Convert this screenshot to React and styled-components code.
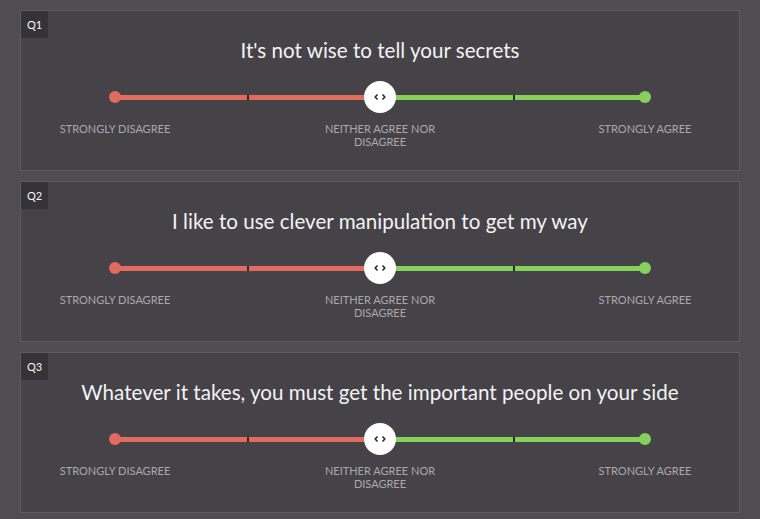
import styled, { createGlobalStyle } from 'styled-components';

const GlobalStyle = createGlobalStyle`
  html, body {
    margin: 0;
    padding: 0;
    background-color: #514c52;
    font-family: Lato, "Open Sans", sans-serif;
  }
`;

const Page = styled.div`
  display: flex;
  flex-direction: column;
  gap: 10px;
  padding: 10px 20px;
`;

const Card = styled.section`
  display: flex;
  flex-direction: column;
  align-items: center;
  height: 161px;
  box-sizing: border-box;
  background-color: #454248;
  border: 1px solid #5f5a60;
`;

const Badge = styled.div`
  align-self: flex-start;
  display: flex;
  align-items: center;
  justify-content: center;
  width: 27px;
  height: 27px;
  background-color: #353337;
  color: #f4f4f4;
  font-size: 11px;
`;

const Title = styled.h2`
  margin: 0;
  font-size: 20.6px;
  line-height: 24px;
  font-weight: 400;
  color: #f3f3f3;
  text-align: center;
`;

const Track = styled.div`
  display: flex;
  align-items: center;
  width: 542px;
  height: 32px;
  margin-top: 19px;
`;

const Dot = styled.span`
  width: 12px;
  height: 12px;
  border-radius: 50%;
  flex: none;
  background-color: ${p => p.$color};
`;

const Bar = styled.span`
  position: relative;
  flex: 1;
  height: 5px;
  margin: 0 -2px;
  background-color: ${p => p.$color};

  &::after {
    content: '';
    position: absolute;
    top: 0;
    bottom: 0;
    left: ${p => p.$tick}px;
    width: 1.5px;
    background-color: #2b2a2c;
  }
`;

const Handle = styled.span`
  position: relative;
  z-index: 1;
  display: flex;
  align-items: center;
  justify-content: center;
  width: 32px;
  height: 32px;
  flex: none;
  border-radius: 50%;
  background-color: #ffffff;
`;

const Labels = styled.div`
  display: grid;
  grid-template-columns: 150px 1fr 150px;
  width: 680px;
  margin-top: 9px;
`;

const Label = styled.span`
  justify-self: center;
  max-width: 126px;
  font-size: 11px;
  line-height: 13px;
  color: #aca8ae;
  text-align: center;
  text-transform: uppercase;
`;

const RED = '#e36a5f';
const GREEN = '#86d05c';

const questions = [
  "It's not wise to tell your secrets",
  'I like to use clever manipulation to get my way',
  'Whatever it takes, you must get the important people on your side',
];

const Arrows = () => (
  <svg width="12" height="8" viewBox="0 0 12 8">
    <path d="M3.5 1.5 L1.2 4 L3.5 6.5 M8.5 1.5 L10.8 4 L8.5 6.5" fill="none" stroke="#2f2d31" strokeWidth="1.6" />
  </svg>
);

const Question = ({ number, text }) => (
  <Card>
    <Badge>Q{number}</Badge>
    <Title>{text}</Title>
    <Track>
      <Dot $color={RED} />
      <Bar $color={RED} $tick={128} />
      <Handle>
        <Arrows />
      </Handle>
      <Bar $color={GREEN} $tick={119} />
      <Dot $color={GREEN} />
    </Track>
    <Labels>
      <Label>Strongly disagree</Label>
      <Label>Neither agree nor disagree</Label>
      <Label>Strongly agree</Label>
    </Labels>
  </Card>
);

const App = () => (
  <>
    <GlobalStyle />
    <Page>
      {questions.map((q, i) => (
        <Question key={i} number={i + 1} text={q} />
      ))}
    </Page>
  </>
);

export default App;
